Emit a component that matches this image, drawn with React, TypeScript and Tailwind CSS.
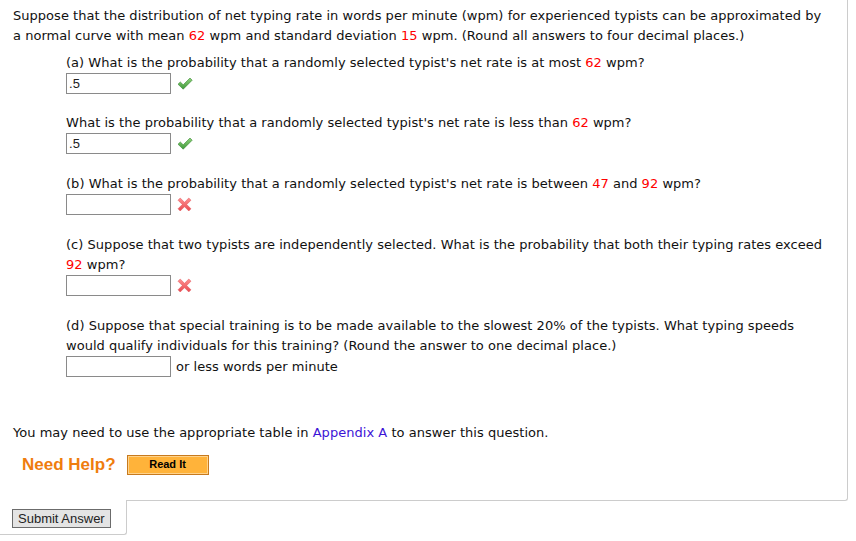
import React from 'react';

const R = ({ children }: { children: React.ReactNode }) => <span className="text-[#ff0000]">{children}</span>;

const Check = () => (
  <svg width="16" height="13" viewBox="0 0 16 13" className="ml-[6px]">
    <defs>
      <linearGradient id="g" x1="0" y1="0" x2="0" y2="1">
        <stop offset="0" stopColor="#8fd07a" />
        <stop offset="1" stopColor="#3f9a3a" />
      </linearGradient>
    </defs>
    <path d="M1 7.2 L3.3 5 L6.2 7.8 L13 1 L15.2 3.2 L6.2 12.2 Z" fill="url(#g)" stroke="#3a8a35" strokeWidth="0.6" strokeLinejoin="round" />
  </svg>
);

const Cross = () => (
  <svg width="15" height="15" viewBox="0 0 15 15" className="ml-[6px]">
    <defs>
      <linearGradient id="r" x1="0" y1="0" x2="0" y2="1">
        <stop offset="0" stopColor="#ff9090" />
        <stop offset="1" stopColor="#e84a50" />
      </linearGradient>
    </defs>
    <path d="M1 3.2 L3.2 1 L7.5 5.3 L11.8 1 L14 3.2 L9.7 7.5 L14 11.8 L11.8 14 L7.5 9.7 L3.2 14 L1 11.8 L5.3 7.5 Z" fill="url(#r)" stroke="#e0555a" strokeWidth="0.5" strokeLinejoin="round" />
  </svg>
);

const Answer = ({ value, mark, after }: { value?: string; mark?: 'ok' | 'bad'; after?: string }) => (
  <div className="flex items-center h-[21px]">
    <div className="w-[105px] h-[21px] border border-[#8a8a8a] bg-white flex items-center pl-[2px] text-[13px] text-[#222] font-['Liberation_Sans',Arial,sans-serif]">
      {value}
    </div>
    {mark === 'ok' && <Check />}
    {mark === 'bad' && <Cross />}
    {after && <span className="ml-[5px]">{after}</span>}
  </div>
);

export default function App() {
  return (
    <div className="w-[856px] h-[541px] bg-white text-[#111] text-[13px] leading-[20px] tracking-[0.03px] font-['DejaVu_Sans',Verdana,sans-serif]">
      <div className="w-[848px] h-[501px] border-r border-b border-[#cccccc] rounded-br-[3px] pt-[6px] pl-[13px]">
        <p>
          Suppose that the distribution of net typing rate in words per minute (wpm) for experienced typists can be approximated by
          <br />
          a normal curve with mean <R>62</R> wpm and standard deviation <R>15</R> wpm. (Round all answers to four decimal places.)
        </p>

        <div className="pl-[53px]">
          <p className="mt-[7px]">
            (a) What is the probability that a randomly selected typist's net rate is at most <R>62</R> wpm?
          </p>
          <Answer value=".5" mark="ok" />

          <p className="mt-[19px]">
            What is the probability that a randomly selected typist's net rate is less than <R>62</R> wpm?
          </p>
          <Answer value=".5" mark="ok" />

          <p className="mt-[20px]">
            (b) What is the probability that a randomly selected typist's net rate is between <R>47</R> and <R>92</R> wpm?
          </p>
          <Answer mark="bad" />

          <p className="mt-[20px]">
            (c) Suppose that two typists are independently selected. What is the probability that both their typing rates exceed
            <br />
            <R>92</R> wpm?
          </p>
          <Answer mark="bad" />

          <p className="mt-[20px]">
            (d) Suppose that special training is to be made available to the slowest 20% of the typists. What typing speeds
            <br />
            would qualify individuals for this training? (Round the answer to one decimal place.)
          </p>
          <Answer after="or less words per minute" />
        </div>

        <p className="mt-[46px]">
          You may need to use the appropriate table in <span className="text-[#3c14d6]">Appendix A</span> to answer this question.
        </p>

        <div className="flex items-center mt-[11px] pl-[9px] h-[21px]">
          <span className="text-[17px] tracking-normal font-bold text-[#ef7d0e] font-['Liberation_Sans',Arial,sans-serif]">Need Help?</span>
          <button className="ml-[11px] w-[82px] h-[20px] border border-[#c77a1e] bg-[#ffb33a] shadow-[inset_0_0_0_1px_#ffd28a] text-[11px] leading-none tracking-normal font-bold text-black font-['Liberation_Sans',Arial,sans-serif]">
            Read It
          </button>
        </div>
      </div>

      <div className="-mt-px w-[127px] h-[35px] bg-white border-r border-b border-[#cccccc] rounded-br-[3px] pl-[12px] pt-[9px]">
        <button className="h-[19px] px-[5px] border border-[#6b6b6b] bg-[#e4e4e4] text-[13px] leading-none tracking-normal text-[#222] font-['Liberation_Sans',Arial,sans-serif]">
          Submit Answer
        </button>
      </div>
    </div>
  );
}
